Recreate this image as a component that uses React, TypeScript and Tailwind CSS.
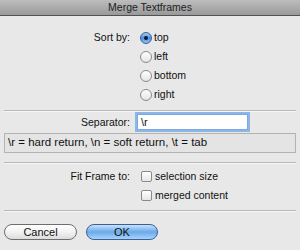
import React, { useState } from "react";

const font = { fontFamily: '"Lucida Grande", "Liberation Sans", sans-serif' };

const Radio = ({ checked }: { checked: boolean }) =>
  checked ? (
    <span className="w-[12px] h-[12px] rounded-full border border-[#3a5f9c] bg-gradient-to-b from-[#a9cdf2] via-[#4f8fdc] to-[#8fc2f5] flex items-center justify-center">
      <span className="w-[4px] h-[4px] rounded-full bg-[#0d1a33]" />
    </span>
  ) : (
    <span className="w-[12px] h-[12px] rounded-full border border-[#8a8a8a] bg-gradient-to-b from-[#ffffff] to-[#e4e4e4]" />
  );

const Check = () => (
  <span className="w-[11px] h-[11px] rounded-[2px] border border-[#8a8a8a] bg-gradient-to-b from-[#ffffff] to-[#e6e6e6]" />
);

const Hr = () => <div className="mx-[4px] h-px bg-[#b8b8b8] border-b border-[#f6f6f6] box-content" />;

export default function App() {
  const [sort, setSort] = useState("top");
  const opts = ["top", "left", "bottom", "right"];

  return (
    <div className="w-[300px] h-[250px] bg-[#e8e8e8] text-[10.5px] text-[#111] flex flex-col overflow-hidden" style={font}>
      <div className="h-[16px] bg-gradient-to-b from-[#bdbdbd] to-[#999999] border-b border-[#515151] flex items-center justify-center text-[10.5px] text-[#222]">
        Merge Textframes
      </div>

      <div className="grid grid-cols-[130px_1fr] gap-x-[10px] pt-[12px] pb-[6px]">
        <div className="text-right h-[19px] leading-[19px]">Sort by:</div>
        <div className="flex flex-col">
          {opts.map((o) => (
            <label key={o} className="h-[19px] flex items-center gap-[2px]" onClick={() => setSort(o)}>
              <Radio checked={sort === o} />
              <span>{o}</span>
            </label>
          ))}
        </div>
      </div>

      <Hr />

      <div className="grid grid-cols-[130px_1fr] gap-x-[7px] pt-[2px]">
        <div className="text-right h-[16px] leading-[16px]">Separator:</div>
        <div className="w-[111px] h-[16px] bg-white border border-[#7ea9df] ring-2 ring-[#8cb6ea] flex items-center px-[3px] text-[11px]">
          \r
        </div>
      </div>

      <div className="mx-[4px] mt-[3px] h-[20px] border border-[#b3b3b3] bg-[#e4e4e4] flex items-center pl-[3px] text-[11.5px]">
        {"\\r = hard return, \\n = soft return, \\t = tab"}
      </div>

      <div className="mt-[9px]">
        <Hr />
      </div>

      <div className="grid grid-cols-[130px_1fr] gap-x-[11px] pt-[3px] pb-[5px]">
        <div className="text-right h-[19px] leading-[19px]">Fit Frame to:</div>
        <div className="flex flex-col">
          <label className="h-[19px] flex items-center gap-[3px]">
            <Check />
            <span>selection size</span>
          </label>
          <label className="h-[19px] flex items-center gap-[3px]">
            <Check />
            <span>merged content</span>
          </label>
        </div>
      </div>

      <Hr />

      <div className="flex gap-[9px] px-[4px] pt-[12px]">
        <button className="w-[73px] h-[16px] rounded-full border border-[#6e6e6e] bg-gradient-to-b from-[#ffffff] via-[#f2f2f2] to-[#dcdcdc] text-[11px] leading-none">
          Cancel
        </button>
        <button className="w-[72px] h-[16px] rounded-full border border-[#3b5f94] bg-gradient-to-b from-[#c9e2fb] via-[#6aa9ea] to-[#a7d4fb] text-[11px] leading-none">
          OK
        </button>
      </div>
    </div>
  );
}
